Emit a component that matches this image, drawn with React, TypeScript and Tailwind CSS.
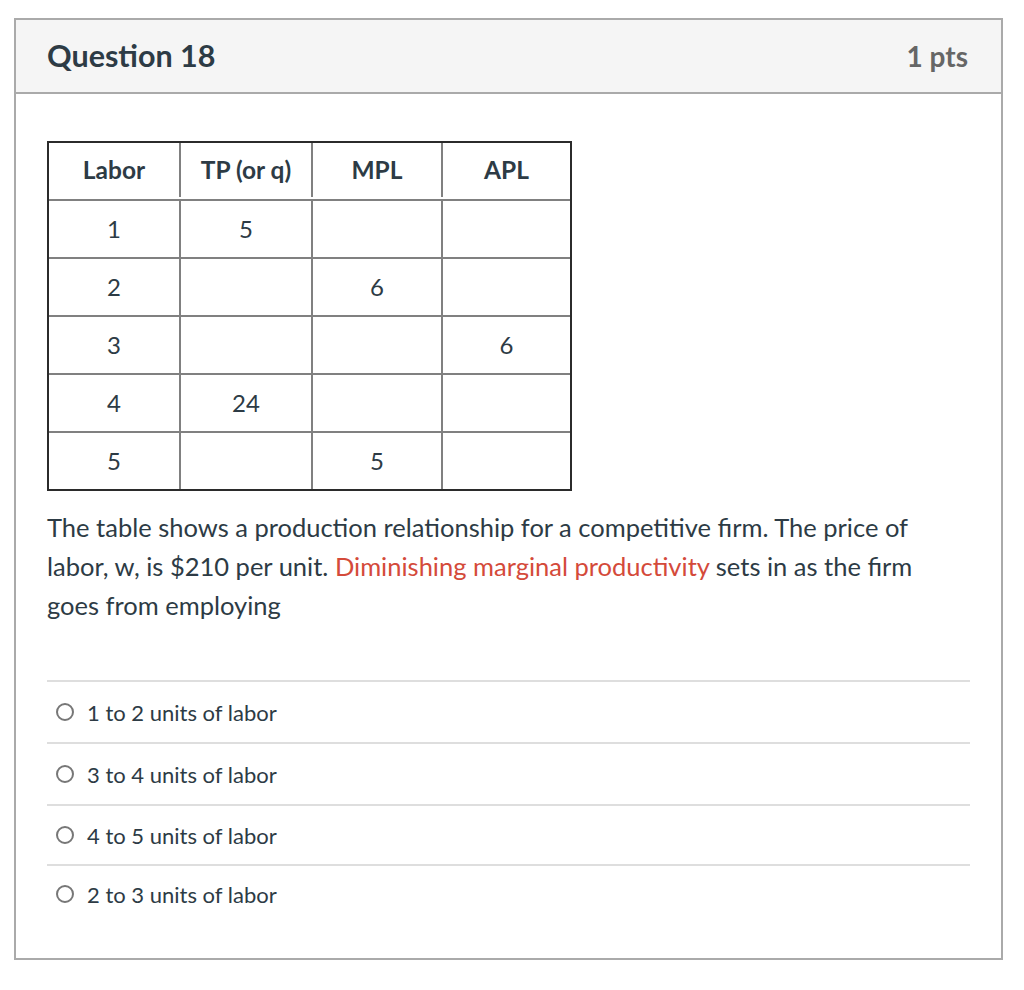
const rows = [
  ['1', '5', '', ''],
  ['2', '', '6', ''],
  ['3', '', '', '6'],
  ['4', '24', '', ''],
  ['5', '', '5', ''],
]

const answers = [
  { text: '1 to 2 units of labor', h: 'h-[62px]' },
  { text: '3 to 4 units of labor', h: 'h-[62px]' },
  { text: '4 to 5 units of labor', h: 'h-[60px]' },
  { text: '2 to 3 units of labor', h: 'h-[58px]' },
]

const colWidths = ['w-[132px]', 'w-[132px]', 'w-[130px]', 'w-[127px]']

function Cell({ text, col, head }: { text: string; col: number; head?: boolean }) {
  return (
    <div
      className={`flex items-center justify-center ${colWidths[col]} ${col < 3 ? 'border-r-2 border-[#808080]' : ''} ${
        head ? 'text-[24.5px] font-bold' : 'text-[24px]'
      }`}
    >
      {text}
    </div>
  )
}

export default function App() {
  return (
    <div className="min-h-[990px] bg-white pl-[14px] pt-[18px]" style={{ fontFamily: 'Lato, "Noto Sans", sans-serif' }}>
      <div className="w-[989px] border-2 border-[#aaaaaa] bg-white text-[#2d3b45]">
        <div className="flex h-[74px] items-center justify-between border-b-2 border-[#aaaaaa] bg-[#f5f5f5] pr-[33px] pl-[31px]">
          <h2 className="text-[30.5px] font-bold">Question 18</h2>
          <span className="text-[28px] font-bold text-[#666666]">1 pts</span>
        </div>

        <div className="px-[31px] pt-[47px] pb-[36px]">
          <div className="w-[525px] border-2 border-[#2b2b2b]">
            <div className="flex h-[58px] border-b-2 border-[#808080] pb-[2px]">
              {['Labor', 'TP (or q)', 'MPL', 'APL'].map((h, i) => (
                <Cell key={h} text={h} col={i} head />
              ))}
            </div>
            {rows.map((r, ri) => (
              <div key={ri} className={`flex ${ri < rows.length - 1 ? 'h-[58px] border-b-2 border-[#808080]' : 'h-[56px]'}`}>
                {r.map((c, ci) => (
                  <Cell key={ci} text={c} col={ci} />
                ))}
              </div>
            ))}
          </div>

          <p className="mt-[17px] text-[25.5px] leading-[39px]">
            The table shows a production relationship for a competitive firm. The price of labor, w, is $210 per unit.{' '}
            <span className="text-[#d44a3a]">Diminishing marginal productivity</span> sets in as the firm goes from employing
          </p>

          <div className="mt-[55px]">
            {answers.map((a) => (
              <div key={a.text} className={`flex items-center border-t-2 border-[#dedede] ${a.h}`}>
                <span className="ml-[9px] mr-[13px] h-[18px] w-[18px] rounded-full border-2 border-[#777777] bg-white" />
                <span className="text-[22px]">{a.text}</span>
              </div>
            ))}
          </div>
        </div>
      </div>
    </div>
  )
}
